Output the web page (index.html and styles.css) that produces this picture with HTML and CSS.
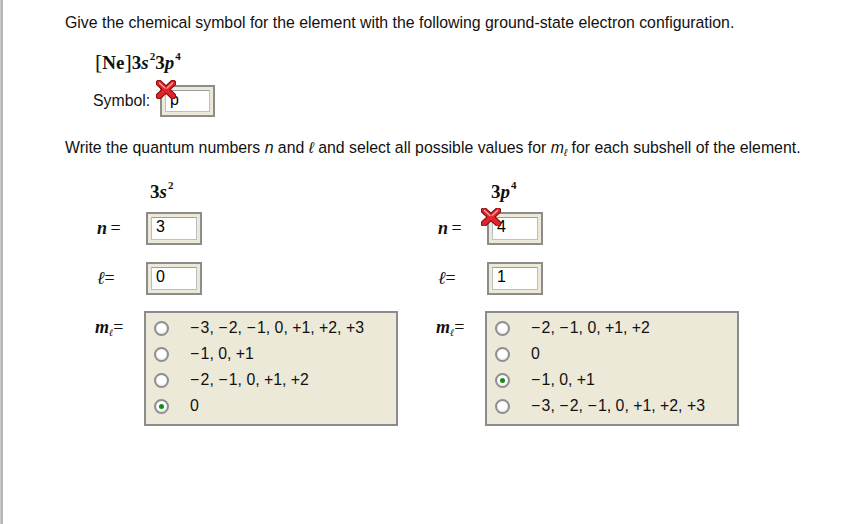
FILE: index.html
```html
<!DOCTYPE html>
<html>
<head>
<meta charset="utf-8">
<link rel="stylesheet" href="styles.css">
</head>
<body>
<div class="page">
  <div class="content">
    <p class="q">Give the chemical symbol for the element with the following ground-state electron configuration.</p>
    <div class="formula"><span class="br">[</span>Ne<span class="br">]</span>3<i>s</i><sup>2</sup>3<i>p</i><sup>4</sup></div>
    <div class="symbol-row">
      <span class="symbol-label">Symbol:</span>
      <span class="box sym-box">
        <span class="field">p</span>
        <svg class="wrong w-sym" viewBox="0 0 20 18" width="20" height="19"><path d="M3 2.5 L17 15.5 M17 2.5 L3 15.5" stroke="#7a0a0a" stroke-width="6.5" stroke-linecap="round"/><path d="M3 2.5 L17 15.5 M17 2.5 L3 15.5" stroke="#e0242a" stroke-width="4.5" stroke-linecap="round"/><path d="M3.5 2.5 L9 7.6 M16.5 2.5 L11 7.6" stroke="#f8b0b0" stroke-width="1.2" stroke-linecap="round"/></svg>
      </span>
    </div>
    <p class="q q2">Write the quantum numbers <i>n</i> and <i>ℓ</i> and select all possible values for <i>m</i><sub class="ell">ℓ</sub> for each subshell of the element.</p>

    <div class="cols">
      <div class="col">
        <div class="col-head">3<i>s</i><sup>2</sup></div>
        <div class="row row-n">
          <span class="lbl"><b><i>n</i></b>&thinsp;=</span>
          <span class="box"><span class="field">3</span></span>
        </div>
        <div class="row row-l">
          <span class="lbl"><i>ℓ</i>=</span>
          <span class="box"><span class="field">0</span></span>
        </div>
        <div class="row row-m">
          <span class="lbl lbl-m"><b><i>m</i></b><sub><i>ℓ</i></sub>=</span>
          <div class="radios">
            <div class="opt"><span class="radio"></span><span>&minus;&#8202;3, &minus;&#8202;2, &minus;&#8202;1, 0, +1, +2, +3</span></div>
            <div class="opt"><span class="radio"></span><span>&minus;&#8202;1, 0, +1</span></div>
            <div class="opt"><span class="radio"></span><span>&minus;&#8202;2, &minus;&#8202;1, 0, +1, +2</span></div>
            <div class="opt"><span class="radio on"></span><span>0</span></div>
          </div>
        </div>
      </div>
      <div class="col">
        <div class="col-head">3<i>p</i><sup>4</sup></div>
        <div class="row row-n">
          <span class="lbl"><b><i>n</i></b>&thinsp;=</span>
          <span class="box">
            <span class="field">4</span>
            <svg class="wrong w-n" viewBox="0 0 20 18" width="20" height="18"><path d="M3 2.5 L17 15.5 M17 2.5 L3 15.5" stroke="#7a0a0a" stroke-width="6.5" stroke-linecap="round"/><path d="M3 2.5 L17 15.5 M17 2.5 L3 15.5" stroke="#e0242a" stroke-width="4.5" stroke-linecap="round"/><path d="M3.5 2.5 L9 7.6 M16.5 2.5 L11 7.6" stroke="#f8b0b0" stroke-width="1.2" stroke-linecap="round"/></svg>
          </span>
        </div>
        <div class="row row-l">
          <span class="lbl"><i>ℓ</i>=</span>
          <span class="box"><span class="field">1</span></span>
        </div>
        <div class="row row-m">
          <span class="lbl lbl-m"><b><i>m</i></b><sub><i>ℓ</i></sub>=</span>
          <div class="radios">
            <div class="opt"><span class="radio"></span><span>&minus;&#8202;2, &minus;&#8202;1, 0, +1, +2</span></div>
            <div class="opt"><span class="radio"></span><span>0</span></div>
            <div class="opt"><span class="radio on"></span><span>&minus;&#8202;1, 0, +1</span></div>
            <div class="opt"><span class="radio"></span><span>&minus;&#8202;3, &minus;&#8202;2, &minus;&#8202;1, 0, +1, +2, +3</span></div>
          </div>
        </div>
      </div>
    </div>
  </div>
</div>
</body>
</html>
```

FILE: styles.css
```css
html, body {
  margin: 0;
  padding: 0;
  background: #fff;
}
.page {
  min-height: 524px;
  background: linear-gradient(to right, #d4d4d4 0, #a8a8a8 2px, #c8c8c8 3px, #fff 3px);
  font-family: "Liberation Sans", Arial, sans-serif;
  color: #111;
}
.content {
  padding: 14px 0 0 65px;
}
.q {
  margin: 0;
  font-size: 15.85px;
  line-height: 18px;
}
.formula {
  margin: 18px 0 0 30px;
  height: 24px;
  font-family: "Liberation Serif", "Times New Roman", serif;
  font-weight: bold;
  font-size: 19px;
  line-height: 24px;
}
.formula .br {
  font-weight: normal;
  font-size: 22px;
}
.formula sup, .col-head sup {
  font-size: 11px;
  vertical-align: 9px;
  line-height: 0;
  padding-left: 1px;
}
.symbol-row {
  display: flex;
  align-items: center;
  margin: 11px 0 0 28px;
  font-size: 15.85px;
}
.symbol-label {
  width: 67px;
}
.box {
  position: relative;
  display: inline-block;
  box-sizing: border-box;
  width: 56px;
  height: 33px;
  border: 2px solid #8c8c8c;
  background: #ece9d8;
  padding: 3px;
}
.sym-box {
  width: 55px;
  height: 32px;
}
.field {
  display: block;
  box-sizing: border-box;
  height: 100%;
  background: #fff;
  border: 1px solid #b9c0c0;
  border-top-color: #9aa0a0;
  font-size: 16px;
  line-height: 16px;
  padding: 1px 0 0 4px;
  color: #000;
}
.wrong {
  position: absolute;
}
.w-sym {
  left: -6px;
  top: -7px;
}
.w-n {
  left: -8px;
  top: -6px;
}
.q2 {
  margin-top: 22px;
}
.cols {
  display: flex;
  margin: 18px 0 0 30px;
}
.col {
  width: 341px;
}
.col-head {
  margin-left: 55px;
  height: 24px;
  font-family: "Liberation Serif", "Times New Roman", serif;
  font-weight: bold;
  font-size: 19px;
  line-height: 24px;
}
.row {
  display: flex;
  align-items: center;
}
.row-n {
  margin-top: 8px;
}
.row-l {
  margin-top: 17px;
}
.row-m {
  margin-top: 16px;
  align-items: flex-start;
}
.lbl {
  width: 51px;
  font-family: "Liberation Serif", "Times New Roman", serif;
  font-size: 18px;
  padding-left: 2px;
  box-sizing: border-box;
}
.lbl-m {
  padding: 6px 0 0 0;
  width: 49px;
}
.lbl sub {
  font-size: 10px;
  vertical-align: -3px;
  font-weight: bold;
}
.ell {
  font-size: 10px;
  font-style: italic;
  vertical-align: -3px;
}
.radios {
  box-sizing: border-box;
  width: 254px;
  height: 115px;
  border: 2px solid #8c8c8c;
  background: #ece9d8;
  padding: 2px 0 5px 8px;
}
.opt {
  display: flex;
  align-items: center;
  height: 26px;
  font-size: 15.85px;
}
.radio {
  box-sizing: border-box;
  width: 15px;
  height: 15px;
  border-radius: 50%;
  border: 2px solid #8e8e8e;
  background: radial-gradient(circle at 50% 40%, #ffffff 0, #ffffff 45%, #d8d8d8 100%);
  margin-right: 21px;
  position: relative;
  flex: none;
}
.radio.on::after {
  content: "";
  position: absolute;
  left: 3px;
  top: 3px;
  width: 5px;
  height: 5px;
  border-radius: 50%;
  background: #138a13;
}
```
